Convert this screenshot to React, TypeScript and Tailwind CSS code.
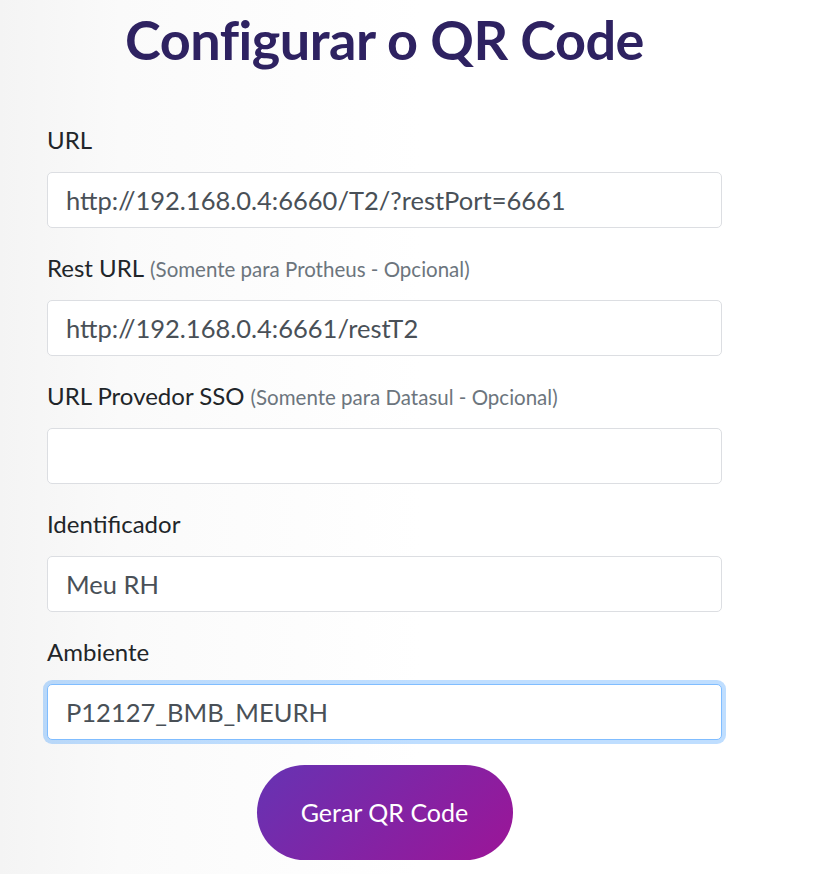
import React, { useState } from 'react';

const FIELDS = [
    { id: 'url', label: 'URL', hint: '', value: 'http://192.168.0.4:6660/T2/?restPort=6661' },
    { id: 'rest', label: 'Rest URL', hint: '(Somente para Protheus - Opcional)', value: 'http://192.168.0.4:6661/restT2' },
    { id: 'sso', label: 'URL Provedor SSO', hint: '(Somente para Datasul - Opcional)', value: '' },
    { id: 'ident', label: 'Identificador', hint: '', value: 'Meu RH' },
    { id: 'env', label: 'Ambiente', hint: '', value: 'P12127_BMB_MEURH' },
];

const App = () => {
    const [values, setValues] = useState<Record<string, string>>(
        Object.fromEntries(FIELDS.map(f => [f.id, f.value]))
    );

    return (
        <div className="min-h-[874px] w-full bg-[linear-gradient(90deg,#f4f4f4_0px,#fafafa_120px,#ffffff_420px)] font-['Lato','Noto_Sans',sans-serif]">
            <div className="w-[675px] ml-[47px] pt-[5px] pb-4">
                <h1 className="h-[70px] leading-[70px] text-center text-[54px] font-bold text-[#2e2261] tracking-[-0.5px]">
                    Configurar o QR Code
                </h1>

                <form className="mt-[51px] flex flex-col gap-[26px]" onSubmit={e => e.preventDefault()}>
                    {FIELDS.map(f => (
                        <div key={f.id}>
                            <label htmlFor={f.id} className="block h-[32px] leading-[27px] mb-[14px] text-[24px] text-[#212529]">
                                {f.label}
                                {f.hint && <span className="ml-[6px] text-[20.5px] text-[#6c757d]">{f.hint}</span>}
                            </label>
                            <input
                                id={f.id}
                                value={values[f.id]}
                                onChange={e => setValues({ ...values, [f.id]: e.target.value })}
                                className={`block w-full h-[56px] px-[18px] rounded-[5px] bg-white text-[25.5px] text-[#495057] outline-none border ${f.id === 'env' ? 'border-[#80bdff] shadow-[0_0_0_4px_rgba(0,123,255,0.25)]' : 'border-[#dcdee2]'}`}
                            />
                        </div>
                    ))}

                    <div className="flex justify-center -mt-[1px]">
                        <button
                            type="submit"
                            className="w-[256px] h-[95px] rounded-full bg-[linear-gradient(135deg,#6633b3,#9c1597)] text-white text-[25px]"
                        >
                            Gerar QR Code
                        </button>
                    </div>
                </form>
            </div>
        </div>
    );
};

export default App;
